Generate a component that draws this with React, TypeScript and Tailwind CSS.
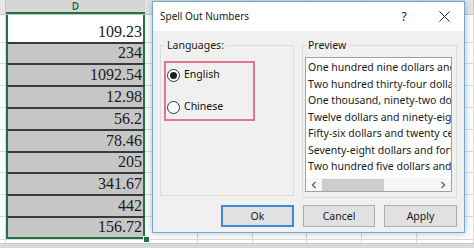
import React from 'react';

const rows = [
  { v: '109.23', h: 'h-[27px]', first: true },
  { v: '234', h: 'h-[21px]' },
  { v: '1092.54', h: 'h-[22px]' },
  { v: '12.98', h: 'h-[22px]' },
  { v: '56.2', h: 'h-[22px]' },
  { v: '78.46', h: 'h-[22px]' },
  { v: '205', h: 'h-[21px]' },
  { v: '341.67', h: 'h-[22px]' },
  { v: '442', h: 'h-[22px]' },
  { v: '156.72', h: 'h-[23px]' },
];

const otherCols = ['w-[54px]', 'w-[56px]', 'w-[55px]', 'w-[57px]', 'w-[56px]', 'w-[58px]'];

const preview = [
  'One hundred nine dollars and twenty-three cents',
  'Two hundred thirty-four dollars',
  'One thousand, ninety-two dollars and fifty-four cents',
  'Twelve dollars and ninety-eight cents',
  'Fifty-six dollars and twenty cents',
  'Seventy-eight dollars and forty-six cents',
  'Two hundred five dollars and no cents',
];

function Radio({ checked, label }: { checked?: boolean; label: string }) {
  return (
    <div className="flex items-center h-[16px] gap-[4px]">
      <span className="w-[13px] h-[13px] rounded-full border border-[#333] bg-white flex items-center justify-center">
        {checked && <span className="w-[7px] h-[7px] rounded-full bg-[#1f1f1f]" />}
      </span>
      <span className="text-[10.5px] text-[#111]">{label}</span>
    </div>
  );
}

export default function App() {
  return (
    <div className="relative w-[474px] h-[248px] overflow-hidden bg-white font-['Noto_Sans',sans-serif]">
      {/* header */}
      <div className="flex h-[15px] bg-[#e6e6e6] border-b border-[#c4c4c4]">
        <div className="w-[6px] border-r border-[#c4c4c4]" />
        <div className="w-[142px] bg-[#d6d6d6] border-b-2 border-[#217346] flex items-center justify-center text-[10px] font-semibold text-[#217346] leading-none">D</div>
        {otherCols.map((w, i) => (
          <div key={i} className={`${w} border-r border-[#c4c4c4]`} />
        ))}
      </div>
      {/* rows */}
      {rows.map((r, i) => (
        <div key={i} className={`flex ${r.h}`}>
          <div className={`w-[6px] border-r border-[#dadada] ${r.first ? '' : 'border-t'}`} />
          <div
            className={`w-[142px] border-x-2 border-x-[#217346] flex items-end justify-end pr-[1px] pb-[2px] font-['Liberation_Serif',serif] text-[16px] leading-none text-[#1a1a1a] ${
              r.first ? 'bg-white' : 'bg-[#c6c6c6] border-t-2 border-t-[#3a3a3a]'
            } ${i === rows.length - 1 ? 'border-b-2 border-b-[#217346]' : ''}`}
          >
            {r.v}
          </div>
          {otherCols.map((w, j) => (
            <div key={j} className={`${w} border-r border-[#dadada] ${r.first ? '' : 'border-t'} border-t-[#dadada]`} />
          ))}
        </div>
      ))}
      <div className="flex h-[4px] border-t border-[#dadada]">
        <div className="w-[6px] border-r border-[#dadada]" />
        <div className="w-[142px]" />
        {otherCols.map((w, j) => (
          <div key={j} className={`${w} border-r border-[#dadada]`} />
        ))}
      </div>
      <div className="h-[10px] bg-[#d9d9d9] border-t border-[#c8c8c8]" />

      {/* fill handle */}
      <div className="absolute left-[143px] top-[236px] w-[7px] h-[7px] bg-[#217346] border border-white" />

      {/* dialog */}
      <div className="absolute left-[152px] top-[1px] w-[313px] h-[232px] border border-[#6fa8dc] bg-[#f0f0f0] shadow-[0_0_8px_rgba(0,0,0,0.28)] flex flex-col">
        <div className="h-[29px] bg-white flex items-center pl-[7px] text-[10px] text-[#1a1a1a]">
          <span>Spell Out Numbers</span>
          <span className="ml-auto w-[14px] text-center text-[12px]">?</span>
          <span className="ml-[27px] mr-[14px] w-[12px] h-[12px] flex items-center justify-center">
            <svg width="11" height="11" viewBox="0 0 11 11">
              <path d="M0.5 0.5L10.5 10.5M10.5 0.5L0.5 10.5" stroke="#222" strokeWidth="1" />
            </svg>
          </span>
        </div>
        <div className="flex gap-[8px] pl-[7px] pt-[7px]">
          <fieldset className="w-[134px] h-[158px] border border-[#dcdcdc]">
            <legend className="ml-[4px] px-[2px] text-[10.5px] text-[#1a1a1a] leading-[15px]">Languages:</legend>
            <div className="mt-[8px] ml-[3px] w-[91px] h-[60px] border-2 border-[#e2768c] flex flex-col pl-[1px] pt-[4px] gap-[16px]">
              <Radio checked label="English" />
              <Radio label="Chinese" />
            </div>
          </fieldset>
          <fieldset className="w-[155px] h-[160px] border border-[#dcdcdc]">
            <legend className="ml-[3px] px-[2px] text-[10.5px] text-[#1a1a1a] leading-[15px]">Preview</legend>
            <div className="mt-[4px] ml-[2px] w-[147px] h-[135px] border border-[#a3a3a3] bg-white flex flex-col overflow-hidden">
              <div className="pt-[1px] pl-[2px]">
                {preview.map((t) => (
                  <div key={t} className="whitespace-nowrap text-[10.5px] leading-[16.5px] text-[#1a1a1a]">{t}</div>
                ))}
              </div>
              <div className="mt-auto h-[13px] flex items-center bg-[#f7f7f7]">
                <div className="w-[16px] flex justify-center">
                  <svg width="6" height="8" viewBox="0 0 6 8">
                    <path d="M4.5 0.8L1.5 4L4.5 7.2" stroke="#555" strokeWidth="1.2" fill="none" />
                  </svg>
                </div>
                <div className="w-[62px] h-[12px] bg-[#cdcdcd]" />
                <div className="ml-auto w-[16px] flex justify-center">
                  <svg width="6" height="8" viewBox="0 0 6 8">
                    <path d="M1.5 0.8L4.5 4L1.5 7.2" stroke="#555" strokeWidth="1.2" fill="none" />
                  </svg>
                </div>
              </div>
            </div>
          </fieldset>
        </div>
        <div className="mt-auto mb-[5px] pr-[7px] flex justify-end gap-[9px] text-[10.5px] text-[#1a1a1a]">
          <button className="w-[73px] h-[22px] border-2 border-[#3c8ad8] bg-[#e1e1e1] leading-none">Ok</button>
          <button className="w-[72px] h-[22px] border border-[#adadad] bg-[#e1e1e1] leading-none">Cancel</button>
          <button className="w-[73px] h-[22px] border border-[#adadad] bg-[#e1e1e1] leading-none">Apply</button>
        </div>
      </div>
    </div>
  );
}
